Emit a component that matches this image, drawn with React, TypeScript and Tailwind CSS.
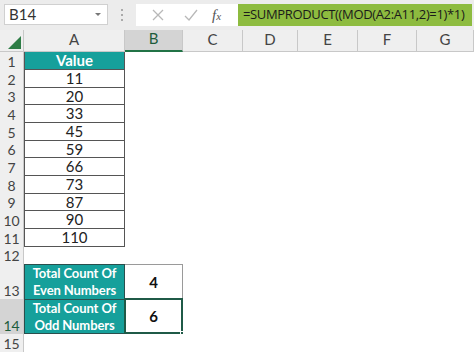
import React from 'react';

const cols = ['A', 'B', 'C', 'D', 'E', 'F', 'G'];
const values = [11, 20, 33, 45, 59, 66, 73, 87, 90, 110];
const heights = ['h-[18px]', 'h-[18px]', 'h-[17px]', 'h-[18px]', 'h-[18px]', 'h-[17px]', 'h-[18px]', 'h-[18px]', 'h-[17px]', 'h-[18px]', 'h-[18px]'];

const font = { fontFamily: 'Lato, "Open Sans", sans-serif' };

const RowHead = ({ n, cls, selected }: { n: number; cls: string; selected?: boolean }) => (
  <div
    className={`${cls} flex items-end justify-center text-[14px] leading-[16px] border-r border-[#c8c8c8] ${
      selected ? 'bg-[#d4d4d4] text-[#1d5c3c]' : 'bg-[#efefef] text-[#444]'
    }`}
  >
    {n}
  </div>
);

const Empty = ({ cls }: { cls: string }) => <div className={`${cls} bg-white`} />;

export default function App() {
  return (
    <div className="w-[474px] h-[352px] overflow-hidden bg-white" style={font}>
      {/* toolbar */}
      <div className="h-[30px] bg-[#ececec] flex items-start pt-[4px] pl-[4px]">
        <div className="w-[104px] h-[21px] bg-white border border-[#d0d0d0] flex items-center justify-between pl-[4px] pr-[6px]">
          <span className="text-[15px] text-[#333]">B14</span>
          <span className="w-0 h-0 border-l-[3px] border-r-[3px] border-t-[3px] border-l-transparent border-r-transparent border-t-[#777]" />
        </div>
        <div className="w-[28px] h-[21px] flex flex-col items-center justify-center gap-[3px]">
          <span className="w-[2px] h-[2px] bg-[#aaa]" />
          <span className="w-[2px] h-[2px] bg-[#aaa]" />
          <span className="w-[2px] h-[2px] bg-[#aaa]" />
        </div>
        <div className="w-[102px] h-[22px] bg-white flex items-center">
          <svg width="34" height="22" viewBox="0 0 34 22" className="ml-[6px]">
            <path d="M11 6 L21 16 M21 6 L11 16" stroke="#b8b8b8" strokeWidth="1.3" fill="none" />
          </svg>
          <svg width="30" height="22" viewBox="0 0 30 22">
            <path d="M9 12 L13 16 L21 6" stroke="#b8b8b8" strokeWidth="1.3" fill="none" />
          </svg>
          <span className="ml-[6px] text-[15px] italic text-[#555]" style={{ fontFamily: '"Liberation Serif", serif' }}>
            f<span className="text-[11px]">x</span>
          </span>
        </div>
        <div className="w-[234px] h-[22px] bg-[#8dbb3f] flex items-center pl-[5px]">
          <span className="text-[13px] tracking-[-0.35px] text-[#1a1a1a] whitespace-nowrap" style={{ fontFamily: '"Open Sans", sans-serif' }}>
            =SUMPRODUCT((MOD(A2:A11,2)=1)*1)
          </span>
        </div>
      </div>

      <div className="grid grid-cols-[24px_101px_58px_60px_55px_60px_59px_57px]">
        {/* column header */}
        <div className="h-[22px] bg-[#efefef] border-r border-b border-[#c8c8c8] flex items-end justify-end pr-[2px] pb-[2px]">
          <svg width="13" height="13" viewBox="0 0 13 13">
            <path d="M13 0 L13 13 L0 13 Z" fill="#2e7d46" />
          </svg>
        </div>
        {cols.map((c) => (
          <div
            key={c}
            className={`h-[22px] flex items-end justify-center pb-[1px] text-[15px] border-b border-r border-[#c8c8c8] ${
              c === 'B' ? 'bg-[#d4d4d4] text-[#1d5c3c] border-b-[#217346] border-b-2' : 'bg-[#efefef] text-[#444]'
            }`}
          >
            {c}
          </div>
        ))}

        {/* row 1 */}
        <RowHead n={1} cls={heights[0]} />
        <div className={`${heights[0]} bg-[#16a09b] border border-t-0 border-[#555] flex items-center justify-center text-white font-bold text-[15px]`}>
          Value
        </div>
        {[0, 1, 2, 3, 4, 5].map((i) => <Empty key={i} cls={heights[0]} />)}

        {values.map((v, idx) => {
          const h = heights[idx + 1];
          return (
            <React.Fragment key={v}>
              <RowHead n={idx + 2} cls={h} />
              <div className={`${h} bg-white border-l border-r border-b border-[#555] flex items-center justify-center text-[15px] text-[#222]`}>
                {v}
              </div>
              {[0, 1, 2, 3, 4, 5].map((i) => <Empty key={i} cls={h} />)}
            </React.Fragment>
          );
        })}

        {/* row 12 */}
        <RowHead n={12} cls="h-[17px]" />
        {[0, 1, 2, 3, 4, 5, 6].map((i) => <Empty key={i} cls="h-[17px]" />)}

        {/* row 13 */}
        <RowHead n={13} cls="h-[35px]" />
        <div className="h-[35px] bg-[#16a09b] border-l border-t border-r border-[#2a4f4d] flex flex-col items-center justify-center text-white font-bold text-[13px] tracking-[-0.1px] leading-[17px]">
          <span>Total Count Of</span>
          <span>Even Numbers</span>
        </div>
        <div className="h-[35px] bg-white border-t border-r border-[#9a9a9a] flex items-center justify-center font-bold text-[15px] text-[#111]">
          4
        </div>
        {[0, 1, 2, 3, 4].map((i) => <Empty key={i} cls="h-[35px]" />)}

        {/* row 14 */}
        <RowHead n={14} cls="h-[35px]" selected />
        <div className="h-[35px] bg-[#16a09b] border border-[#2a4f4d] flex flex-col items-center justify-center text-white font-bold text-[13px] tracking-[-0.1px] leading-[17px]">
          <span>Total Count Of</span>
          <span>Odd Numbers</span>
        </div>
        <div className="bg-white border-2 border-[#1f5a47] -ml-[1px] -mt-[1px] h-[36px] relative flex items-center justify-center font-bold text-[15px] text-[#111]">
          6
          <span className="absolute -right-[3px] -bottom-[3px] w-[4px] h-[4px] bg-[#1f5a47] border border-white" />
        </div>
        {[0, 1, 2, 3, 4].map((i) => <Empty key={i} cls="h-[35px]" />)}

        {/* row 15 */}
        <RowHead n={15} cls="h-[18px]" />
        {[0, 1, 2, 3, 4, 5, 6].map((i) => <Empty key={i} cls="h-[18px]" />)}
      </div>
    </div>
  );
}
